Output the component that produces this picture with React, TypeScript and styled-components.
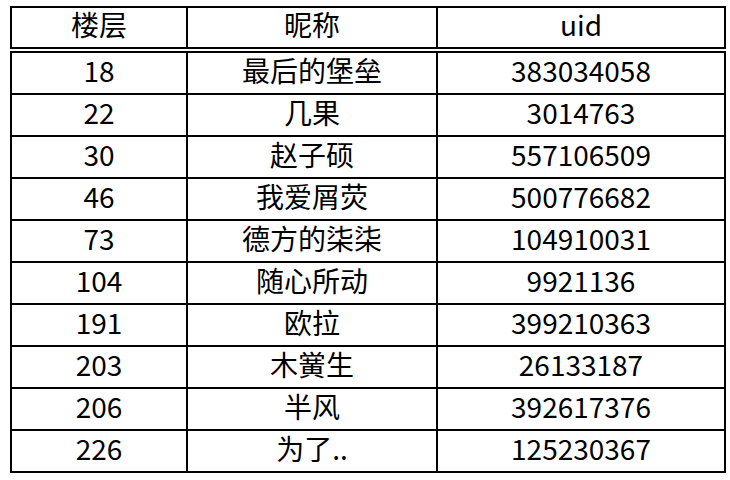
import React from "react";
import styled, { createGlobalStyle } from "styled-components";

interface Floor {
  floor: number;
  nick: string;
  uid: string;
}

const rows: Floor[] = [
  { floor: 18, nick: "最后的堡垒", uid: "383034058" },
  { floor: 22, nick: "几果", uid: "3014763" },
  { floor: 30, nick: "赵子硕", uid: "557106509" },
  { floor: 46, nick: "我爱屑荧", uid: "500776682" },
  { floor: 73, nick: "德方的柒柒", uid: "104910031" },
  { floor: 104, nick: "随心所动", uid: "9921136" },
  { floor: 191, nick: "欧拉", uid: "399210363" },
  { floor: 203, nick: "木黉生", uid: "26133187" },
  { floor: 206, nick: "半风", uid: "392617376" },
  { floor: 226, nick: "为了..", uid: "125230367" },
];

const GlobalStyle = createGlobalStyle`
  html, body {
    margin: 0;
    padding: 0;
    background: #ffffff;
  }
  body {
    font-family: "Noto Sans CJK SC", "Noto Sans", sans-serif;
    color: #000000;
  }
`;

const Page = styled.div`
  padding: 6px 0 0 10px;
`;

const Table = styled.table`
  width: 714px;
  border-collapse: collapse;
  border: 2px solid #000;
  table-layout: fixed;
`;

const HeadCell = styled.th`
  height: 33px;
  padding: 0 0 6px;
  font-size: 28px;
  font-weight: 400;
  line-height: 33px;
  text-align: center;
  border: 2px solid #000;
  border-bottom: 6px double #000;
`;

const Cell = styled.td`
  height: 34px;
  padding: 0 0 6px;
  font-size: 28px;
  line-height: 34px;
  text-align: center;
  border: 2px solid #000;
`;

function App() {
  return (
    <Page>
      <GlobalStyle />
      <Table>
        <colgroup>
          <col style={{ width: 176 }} />
          <col style={{ width: 250 }} />
          <col style={{ width: 288 }} />
        </colgroup>
        <thead>
          <tr>
            <HeadCell>楼层</HeadCell>
            <HeadCell>昵称</HeadCell>
            <HeadCell>uid</HeadCell>
          </tr>
        </thead>
        <tbody>
          {rows.map((row) => (
            <tr key={row.floor}>
              <Cell>{row.floor}</Cell>
              <Cell>{row.nick}</Cell>
              <Cell>{row.uid}</Cell>
            </tr>
          ))}
        </tbody>
      </Table>
    </Page>
  );
}

export default App;
